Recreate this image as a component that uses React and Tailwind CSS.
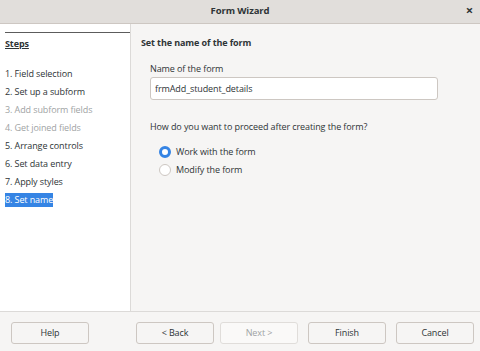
import { useState } from 'react';

const steps = [
  { label: '1. Field selection' },
  { label: '2. Set up a subform' },
  { label: '3. Add subform fields', disabled: true },
  { label: '4. Get joined fields', disabled: true },
  { label: '5. Arrange controls' },
  { label: '6. Set data entry' },
  { label: '7. Apply styles' },
  { label: '8. Set name', active: true },
];

function Radio({ checked, label, onClick }) {
  return (
    <button onClick={onClick} className="flex items-center gap-[5px] h-[18px] text-left">
      {checked ? (
        <span className="w-[12px] h-[12px] rounded-full border-[3px] border-[#3584e4] bg-white" />
      ) : (
        <span className="w-[12px] h-[12px] rounded-full border border-[#cdc7c2] bg-white" />
      )}
      <span>{label}</span>
    </button>
  );
}

export default function App() {
  const [mode, setMode] = useState('work');
  const [name, setName] = useState('frmAdd_student_details');

  return (
    <div className="w-[480px] h-[351px] flex flex-col bg-[#f6f5f4] text-[#2e3436] text-[9px] tracking-[-0.1px] overflow-hidden" style={{ fontFamily: '"Open Sans", "Noto Sans", sans-serif' }}>
      <div className="h-[24px] flex items-center justify-center relative bg-[#e1dedb] border-b border-[#cdc7c2] shrink-0">
        <span className="font-bold text-[9.5px]">Form Wizard</span>
        <span className="absolute right-[7px] top-[4px] text-[13px] font-bold leading-none">×</span>
      </div>

      <div className="flex flex-1 min-h-0">
        <div className="w-[131px] bg-white border-r border-[#dcdad8] pt-[8px] shrink-0">
          <div className="h-px bg-[#5c5c5c] ml-[5px]" />
          <div className="px-[5px] pt-[3px] font-bold underline h-[20px] leading-[16px]">Steps</div>
          <div className="px-[5px] pt-[12px] flex flex-col">
            {steps.map((s) => (
              <div key={s.label} className="h-[18px] flex items-center">
                <span
                  className={
                    s.active
                      ? 'bg-[#3584e4] text-white h-[14px] leading-[14px]'
                      : s.disabled
                      ? 'text-[#a0a3a4]'
                      : ''
                  }
                >
                  {s.label}
                </span>
              </div>
            ))}
          </div>
        </div>

        <div className="flex-1 pl-[10px] pt-[9px]">
          <div className="font-bold h-[20px] flex items-center">Set the name of the form</div>
          <div className="pl-[9px] pr-[42px] pt-[9px]">
            <div className="h-[14px] flex items-center">Name of the form</div>
            <input
              value={name}
              onChange={(e) => setName(e.target.value)}
              className="mt-[1px] w-full h-[23px] bg-white border border-[#cdc7c2] rounded-[3px] px-[4px] outline-none"
            />
            <div className="mt-[20px] h-[14px] flex items-center">How do you want to proceed after creating the form?</div>
            <div className="mt-[9px] pl-[9px] flex flex-col">
              <Radio checked={mode === 'work'} label="Work with the form" onClick={() => setMode('work')} />
              <Radio checked={mode === 'modify'} label="Modify the form" onClick={() => setMode('modify')} />
            </div>
          </div>
        </div>
      </div>

      <div className="h-[40px] border-t border-[#dcdad8] flex items-start pt-[10px] pl-[11px] pr-[6px] shrink-0">
        <button className="w-[78px] h-[22px] rounded-[3px] border border-[#cdc7c2] bg-[#f6f5f4]">Help</button>
        <div className="flex-1" />
        <div className="flex gap-[6px]">
          <button className="w-[78px] h-[22px] rounded-[3px] border border-[#cdc7c2] bg-[#f6f5f4]">&lt; Back</button>
          <button className="w-[78px] h-[22px] rounded-[3px] border border-[#e0ddda] bg-[#faf9f8] text-[#a0a3a4]">Next &gt;</button>
        </div>
        <button className="ml-[10px] w-[78px] h-[22px] rounded-[3px] border border-[#cdc7c2] bg-[#f6f5f4]">Finish</button>
        <button className="ml-[10px] w-[78px] h-[22px] rounded-[3px] border border-[#cdc7c2] bg-[#f6f5f4]">Cancel</button>
      </div>
    </div>
  );
}
